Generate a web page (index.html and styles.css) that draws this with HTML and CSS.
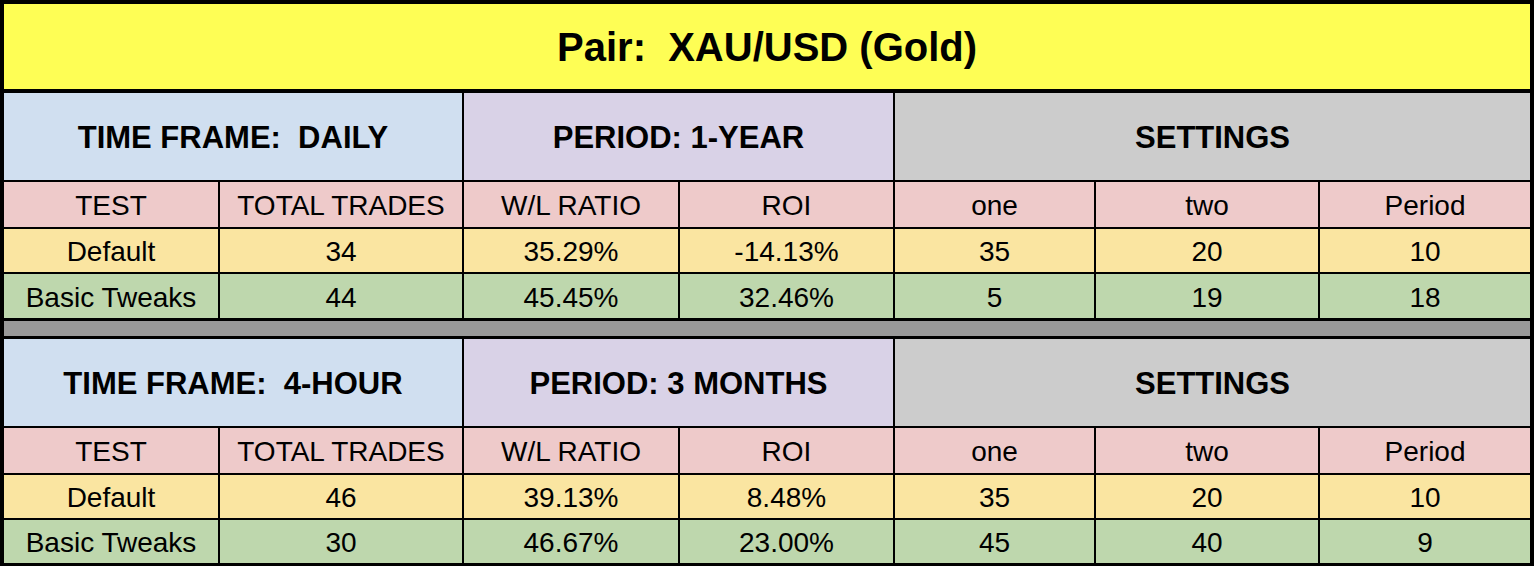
FILE: index.html
```html
<!DOCTYPE html>
<html>
<head>
<meta charset="utf-8">
<link rel="stylesheet" href="styles.css">
</head>
<body>
<table class="sheet">
  <colgroup>
    <col class="c1"><col class="c2"><col class="c3"><col class="c4"><col class="c5"><col class="c6"><col class="c7">
  </colgroup>
  <tbody>
    <tr class="r-title"><td class="title" colspan="7">Pair:&nbsp; XAU/USD (Gold)</td></tr>

    <tr class="r-head">
      <td class="h tf" colspan="2">TIME FRAME:&nbsp; DAILY</td>
      <td class="h per" colspan="2">PERIOD: 1-YEAR</td>
      <td class="h set last" colspan="3">SETTINGS</td>
    </tr>
    <tr class="r-cols pink">
      <td>TEST</td><td>TOTAL TRADES</td><td>W/L RATIO</td><td>ROI</td><td>one</td><td>two</td><td class="last">Period</td>
    </tr>
    <tr class="r-def yellow">
      <td>Default</td><td>34</td><td>35.29%</td><td>-14.13%</td><td>35</td><td>20</td><td class="last">10</td>
    </tr>
    <tr class="r-basic green">
      <td>Basic Tweaks</td><td>44</td><td>45.45%</td><td>32.46%</td><td>5</td><td>19</td><td class="last">18</td>
    </tr>

    <tr class="r-sep"><td class="sep" colspan="7"></td></tr>

    <tr class="r-head">
      <td class="h tf" colspan="2">TIME FRAME:&nbsp; 4-HOUR</td>
      <td class="h per" colspan="2">PERIOD: 3 MONTHS</td>
      <td class="h set last" colspan="3">SETTINGS</td>
    </tr>
    <tr class="r-cols pink">
      <td>TEST</td><td>TOTAL TRADES</td><td>W/L RATIO</td><td>ROI</td><td>one</td><td>two</td><td class="last">Period</td>
    </tr>
    <tr class="r-def yellow">
      <td>Default</td><td>46</td><td>39.13%</td><td>8.48%</td><td>35</td><td>20</td><td class="last">10</td>
    </tr>
    <tr class="r-basic2 green">
      <td>Basic Tweaks</td><td>30</td><td>46.67%</td><td>23.00%</td><td>45</td><td>40</td><td class="last">9</td>
    </tr>
  </tbody>
</table>
</body>
</html>
```

FILE: styles.css
```css
html, body {
  margin: 0;
  padding: 0;
  background: #ffffff;
}

.sheet {
  table-layout: fixed;
  border-collapse: separate;
  border-spacing: 0;
  width: 1534px;
  border-left: 4px solid #000;
  border-top: 4px solid #000;
  font-family: "Liberation Sans", Arial, sans-serif;
  color: #000;
}

.c1 { width: 216px; }
.c2 { width: 244px; }
.c3 { width: 216px; }
.c4 { width: 215px; }
.c5 { width: 201px; }
.c6 { width: 224px; }
.c7 { width: 214px; }

.sheet td {
  padding: 3px 0 0;
  text-align: center;
  vertical-align: middle;
  white-space: nowrap;
  overflow: hidden;
  border-right: 2px solid #000;
  border-bottom: 2px solid #000;
  font-size: 28px;
  line-height: 1;
}

.sheet td.last { border-right-width: 4px; }

.r-title { height: 89px; }
.r-head { height: 89px; }
.r-cols { height: 47px; }
.r-def { height: 45px; }
.r-basic { height: 47px; }
.r-sep { height: 18px; }
.r-basic2 { height: 46px; }

.sheet td.title {
  background: #fefe55;
  font-size: 40px;
  font-weight: bold;
  padding: 0;
  border-right-width: 4px;
  border-bottom-width: 4px;
}

.sheet td.h {
  font-size: 31px;
  font-weight: bold;
  padding: 1px 0 0;
}
.tf { background: #d0dff0; }
.per { background: #d9d2e7; }
.set { background: #cccccc; }

.pink td { background: #eecaca; }
.yellow td { background: #fae5a1; }
.green td { background: #bed7ad; }
.r-basic td, .r-basic2 td { border-bottom-width: 3px; }

.sheet td.sep {
  background: #999999;
  padding: 0;
  border-right-width: 4px;
  border-bottom-width: 3px;
}
```
